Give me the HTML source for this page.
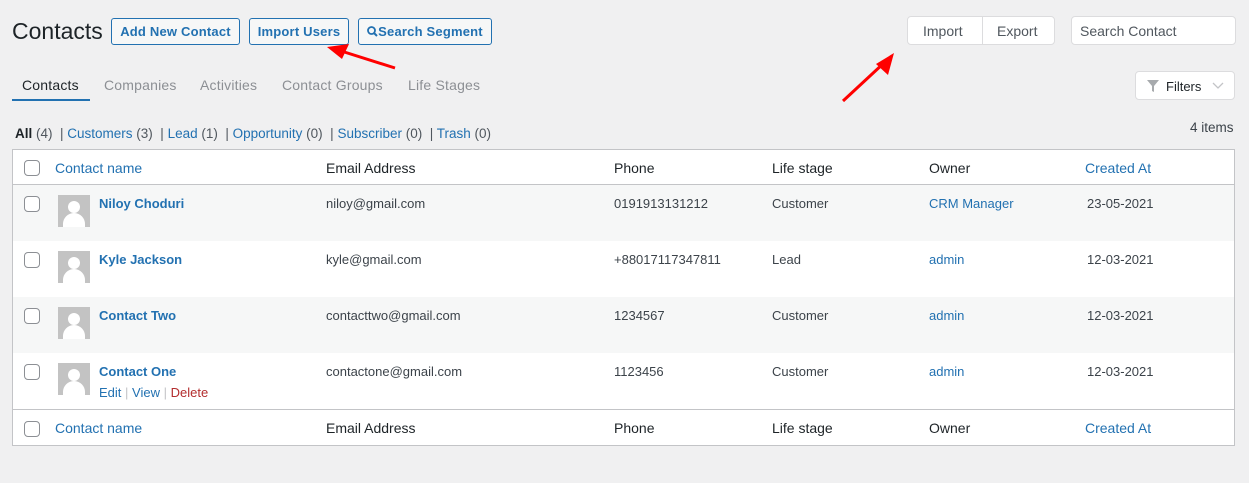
<!DOCTYPE html>
<html><head><meta charset="utf-8"><style>
*{box-sizing:border-box;margin:0;padding:0}
body{width:1249px;height:483px;background:#f0f0f1;font-family:"Liberation Sans",Arial,sans-serif;font-size:13px;color:#3c434a;position:relative;overflow:hidden}
.a{position:absolute;white-space:nowrap}
.btn{position:absolute;height:27px;border:1px solid #2271b1;border-radius:3px;background:#f6f7f7;color:#2271b1;font-weight:bold;font-size:13px;line-height:25px;text-align:center;letter-spacing:0.2px}
.wbox{position:absolute;background:#fff;border:1px solid #dcdcde;border-radius:4px;color:#50575e;font-size:14px}
.tab{position:absolute;top:77px;font-size:14px;color:#8c8f94;letter-spacing:0.2px}
a{color:#2271b1;text-decoration:none}
.table{position:absolute;left:12px;top:149px;width:1223px;height:297px;background:#fff;border:1px solid #c3c4c7}
.row{position:absolute;left:0;width:1221px;height:56px}
.cb{position:absolute;left:11px;width:16px;height:16px;border:1px solid #8c8f94;border-radius:4px;background:#fff}
.av{position:absolute;left:45px;width:32px;height:32px;background:#c3c3c3;overflow:hidden}
.av:before{content:"";position:absolute;left:10px;top:6px;width:12px;height:12px;border-radius:50%;background:#fff}
.av:after{content:"";position:absolute;left:5px;top:18px;width:22px;height:20px;border-radius:11px 11px 0 0;background:#fff}
.c{position:absolute;font-size:13px;color:#3c434a}
.h{font-size:14px;color:#1d2327}
</style></head><body>
<div class="a" style="left:12px;top:18px;font-size:23px;color:#1d2327">Contacts</div>
<div class="btn" style="left:111px;top:18px;width:129px">Add New Contact</div>
<div class="btn" style="left:249px;top:18px;width:100px">Import Users</div>
<div class="btn" style="left:358px;top:18px;width:134px"><svg width="11" height="11" viewBox="0 0 11 11" style="vertical-align:-1px"><circle cx="4.5" cy="4.5" r="3.5" fill="none" stroke="#2271b1" stroke-width="1.8"/><path d="M7 7l3 3" stroke="#2271b1" stroke-width="2"/></svg>Search Segment</div>
<svg class="a" style="left:0;top:0" width="1249" height="160">
<path d="M395 68L338 50" stroke="#f00" stroke-width="3"/><path d="M327 47l22-3-7 15z" fill="#f00"/>
<path d="M843 101L885 62" stroke="#f00" stroke-width="3"/><path d="M894 53l-6 22-12-11z" fill="#f00"/>
</svg>
<div class="wbox" style="left:907px;top:16px;width:148px;height:29px"><span class="a" style="left:15px;top:6px">Import</span><span class="a" style="left:74px;top:0;width:1px;height:27px;background:#dcdcde"></span><span class="a" style="left:89px;top:6px">Export</span></div>
<div class="wbox" style="left:1071px;top:16px;width:165px;height:29px"><span class="a" style="left:8px;top:6px">Search Contact</span></div>
<div class="wbox" style="left:1135px;top:71px;width:100px;height:29px;font-size:13px;color:#1d2327"><svg class="a" style="left:11px;top:8px" width="12" height="12" viewBox="0 0 12 12"><path d="M0 0h12L7 6v6L5 11V6z" fill="#a7aaad"/></svg><span class="a" style="left:30px;top:7px">Filters</span><svg class="a" style="left:76px;top:10px" width="12" height="8"><path d="M1 1l5 5 5-5" fill="none" stroke="#c3c4c7" stroke-width="1.3"/></svg></div>
<div class="tab" style="left:22px;color:#1d2327">Contacts</div>
<div class="a" style="left:12px;top:99px;width:78px;height:2px;background:#2271b1"></div>
<div class="tab" style="left:104px">Companies</div>
<div class="tab" style="left:200px">Activities</div>
<div class="tab" style="left:282px">Contact Groups</div>
<div class="tab" style="left:408px">Life Stages</div>
<div class="a" style="left:15px;top:126px;font-size:13.5px;color:#50575e"><b style="color:#1d2327">All</b> (4) &nbsp;| <a>Customers</a> (3) &nbsp;| <a>Lead</a> (1) &nbsp;| <a>Opportunity</a> (0) &nbsp;| <a>Subscriber</a> (0) &nbsp;| <a>Trash</a> (0)</div>
<div class="a" style="left:1190px;top:120px;color:#3c434a;font-size:13.5px">4 items</div>
<div class="table">
 <div class="row" style="top:0;height:35px;border-bottom:1px solid #c3c4c7">
  <div class="cb" style="top:10px"></div>
  <div class="c h" style="left:42px;top:10px"><a>Contact name</a></div>
  <div class="c h" style="left:313px;top:10px">Email Address</div>
  <div class="c h" style="left:601px;top:10px">Phone</div>
  <div class="c h" style="left:759px;top:10px">Life stage</div>
  <div class="c h" style="left:916px;top:10px">Owner</div>
  <div class="c h" style="left:1072px;top:10px"><a>Created At</a></div>
 </div>
 <div class="row" style="top:35px;background:#f6f7f7"><div class="cb" style="top:11px"></div><div class="av" style="top:10px"></div><div class="c" style="left:86px;top:11px;font-weight:bold"><a>Niloy Choduri</a></div><div class="c" style="left:313px;top:11px">niloy@gmail.com</div><div class="c" style="left:601px;top:11px">0191913131212</div><div class="c" style="left:759px;top:11px">Customer</div><div class="c" style="left:916px;top:11px"><a>CRM Manager</a></div><div class="c" style="left:1074px;top:11px">23-05-2021</div></div>
 <div class="row" style="top:91px;background:#fff"><div class="cb" style="top:11px"></div><div class="av" style="top:10px"></div><div class="c" style="left:86px;top:11px;font-weight:bold"><a>Kyle Jackson</a></div><div class="c" style="left:313px;top:11px">kyle@gmail.com</div><div class="c" style="left:601px;top:11px">+88017117347811</div><div class="c" style="left:759px;top:11px">Lead</div><div class="c" style="left:916px;top:11px"><a>admin</a></div><div class="c" style="left:1074px;top:11px">12-03-2021</div></div>
 <div class="row" style="top:147px;background:#f6f7f7"><div class="cb" style="top:11px"></div><div class="av" style="top:10px"></div><div class="c" style="left:86px;top:11px;font-weight:bold"><a>Contact Two</a></div><div class="c" style="left:313px;top:11px">contacttwo@gmail.com</div><div class="c" style="left:601px;top:11px">1234567</div><div class="c" style="left:759px;top:11px">Customer</div><div class="c" style="left:916px;top:11px"><a>admin</a></div><div class="c" style="left:1074px;top:11px">12-03-2021</div></div>
 <div class="row" style="top:203px;background:#fff"><div class="cb" style="top:11px"></div><div class="av" style="top:10px"></div><div class="c" style="left:86px;top:11px;font-weight:bold"><a>Contact One</a></div><div class="c" style="left:86px;top:32px"><a>Edit</a> <span style="color:#c3c4c7">|</span> <a>View</a> <span style="color:#c3c4c7">|</span> <span style="color:#b32d2e">Delete</span></div><div class="c" style="left:313px;top:11px">contactone@gmail.com</div><div class="c" style="left:601px;top:11px">1123456</div><div class="c" style="left:759px;top:11px">Customer</div><div class="c" style="left:916px;top:11px"><a>admin</a></div><div class="c" style="left:1074px;top:11px">12-03-2021</div></div>
 <div class="row" style="top:259px;height:36px;border-top:1px solid #c3c4c7;background:#fff">
  <div class="cb" style="top:11px"></div>
  <div class="c h" style="left:42px;top:10px"><a>Contact name</a></div>
  <div class="c h" style="left:313px;top:10px">Email Address</div>
  <div class="c h" style="left:601px;top:10px">Phone</div>
  <div class="c h" style="left:759px;top:10px">Life stage</div>
  <div class="c h" style="left:916px;top:10px">Owner</div>
  <div class="c h" style="left:1072px;top:10px"><a>Created At</a></div>
 </div>
</div>
</body></html>
